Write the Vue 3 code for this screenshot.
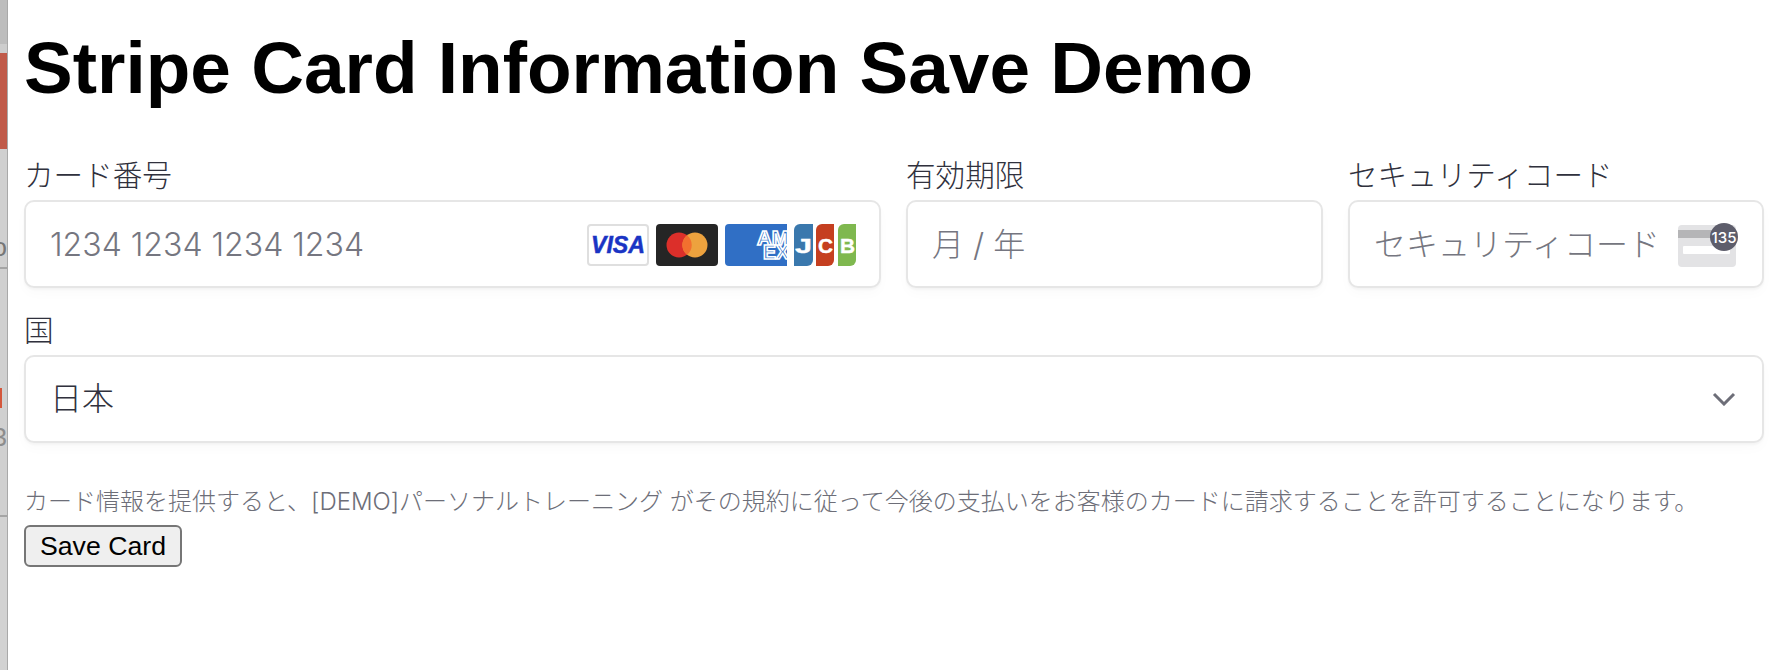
<template>
  <div class="page">
    <div class="strip">
      <div class="seg top"></div>
      <div class="seg light"></div>
      <div class="seg red"></div>
      <div class="seg gray s1"></div>
      <div class="seg gray glyph g1">o</div>
      <div class="seg gray s2"></div>
      <div class="seg line"></div>
      <div class="seg gray s3"></div>
      <div class="seg gray mark"><i></i></div>
      <div class="seg gray s4"></div>
      <div class="seg gray glyph g2">3</div>
      <div class="seg gray s5"></div>
      <div class="seg line"></div>
      <div class="seg gray rest"></div>
    </div>

    <main class="main">
      <h1>Stripe Card Information Save Demo</h1>

      <form class="form" @submit.prevent>
        <div class="row">
          <div class="field">
            <label>カード番号</label>
            <div class="control">
              <input placeholder="1234 1234 1234 1234" readonly />
              <div class="brands">
                <svg class="brand" viewBox="0 0 62 42">
                  <rect x="1" y="1" width="60" height="40" rx="3" fill="#fff" stroke="#dfdfdf" stroke-width="2" />
                  <text x="4" y="29" textLength="54" lengthAdjust="spacingAndGlyphs" class="visa">VISA</text>
                </svg>
                <svg class="brand" viewBox="0 0 62 42">
                  <rect width="62" height="42" rx="4" fill="#252525" />
                  <circle cx="23" cy="21" r="12.5" fill="#dc2f2a" />
                  <circle cx="39" cy="21" r="12.5" fill="#eda23e" />
                  <path d="M31 11.2a12.5 12.5 0 0 1 0 19.6a12.5 12.5 0 0 1 0-19.6z" fill="#f2702f" />
                </svg>
                <svg class="brand" viewBox="0 0 62 42">
                  <path d="M4 0h58v42H4a4 4 0 0 1-4-4V4a4 4 0 0 1 4-4z" fill="#306fc5" />
                  <text x="32" y="20.5" textLength="32" lengthAdjust="spacingAndGlyphs" class="amex">AM</text>
                  <text x="38" y="35" textLength="26" lengthAdjust="spacingAndGlyphs" class="amex">EX</text>
                </svg>
                <svg class="brand" viewBox="0 0 62 42">
                  <path d="M6 0h13v36a6 6 0 0 1-6 6H0V6a6 6 0 0 1 6-6z" fill="#3a78ad" />
                  <path d="M28 0h12v36a6 6 0 0 1-6 6H22V6a6 6 0 0 1 6-6z" fill="#c53f20" />
                  <path d="M50 0h12v36a6 6 0 0 1-6 6H44V6a6 6 0 0 1 6-6z" fill="#7fb84f" />
                  <text x="1" y="28.5" textLength="17" lengthAdjust="spacingAndGlyphs" class="jcb">J</text>
                  <text x="24" y="28.5" textLength="15" lengthAdjust="spacingAndGlyphs" class="jcb">C</text>
                  <text x="46" y="28.5" textLength="15" lengthAdjust="spacingAndGlyphs" class="jcb">B</text>
                </svg>
              </div>
            </div>
          </div>

          <div class="field">
            <label>有効期限</label>
            <div class="control">
              <input placeholder="月 / 年" readonly />
            </div>
          </div>

          <div class="field">
            <label>セキュリティコード</label>
            <div class="control cvc">
              <input placeholder="セキュリティコード" readonly />
              <svg class="cvc-icon" viewBox="0 0 62 46">
                <rect x="0" y="4" width="58" height="42" rx="4" fill="#e3e3e5" />
                <rect x="0" y="9" width="58" height="8" fill="#b5b5b7" />
                <rect x="5" y="25" width="47" height="8" rx="1" fill="#fff" />
                <circle cx="46" cy="16" r="14" fill="#5d5d6b" />
                <text x="46" y="21.5" text-anchor="middle" textLength="25" lengthAdjust="spacingAndGlyphs" class="cvc-num">135</text>
              </svg>
            </div>
          </div>
        </div>

        <div class="field">
          <label>国</label>
          <div class="control select">
            <span>日本</span>
            <svg class="chevron" viewBox="0 0 24 14">
              <path d="M2 2l10 10L22 2" fill="none" stroke="#6d6e78" stroke-width="3" />
            </svg>
          </div>
        </div>

        <p class="note">カード情報を提供すると、[DEMO]パーソナルトレーニング がその規約に従って今後の支払いをお客様のカードに請求することを許可することになります。</p>

        <button type="submit" class="save">Save Card</button>
      </form>
    </main>
  </div>
</template>

<script setup>
</script>

<style>
html, body {
  background: #fff;
}
</style>

<style scoped>
.page {
  display: flex;
  height: 670px;
  overflow: hidden;
  font-family: "Liberation Sans", Arial, sans-serif;
}
.strip {
  flex: 0 0 8px;
  display: flex;
  flex-direction: column;
  overflow: hidden;
  border-right: 1px solid #a9a9a9;
  box-sizing: border-box;
}
.seg {
  flex: none;
}
.top { height: 44px; background: #bdbdbd; }
.light { height: 9px; background: #cdcdcd; }
.red { height: 96px; background: #c05a49; }
.gray { background: #d0d0d0; }
.s1 { height: 85px; }
.glyph {
  height: 26px;
  line-height: 26px;
  font-size: 26px;
  color: #777;
  direction: rtl;
  white-space: nowrap;
}
.s2 { height: 7px; }
.line { height: 2px; background: #a5a5a5; }
.s3 { height: 119px; }
.mark { height: 20px; }
.mark i {
  display: block;
  width: 2px;
  height: 20px;
  background: #d4573c;
}
.s4 { height: 16px; }
.g2 { color: #8d8d8d; }
.s5 { height: 65px; }
.rest { flex: 1; background: #d2d2d2; }

.main {
  flex: 1;
  padding: 0 12px 0 16px;
  min-width: 0;
}
h1 {
  margin: 26px 0 0;
  font-size: 73px;
  line-height: 83px;
  font-weight: 700;
  color: #000;
}
.form {
  margin-top: 49px;
  display: flex;
  flex-direction: column;
  font-family: Inter, "Noto Sans CJK JP", sans-serif;
}
.row {
  display: grid;
  grid-template-columns: 857px 417px 416px;
  gap: 25px;
  margin-bottom: 25px;
}
.field {
  display: flex;
  flex-direction: column;
  min-width: 0;
}
label {
  font-size: 29.6px;
  font-weight: 300;
  line-height: 34px;
  margin-bottom: 8px;
  color: #30313d;
}
.control {
  display: flex;
  align-items: center;
  height: 88px;
  box-sizing: border-box;
  padding: 0 24px;
  background: #fff;
  border: 2px solid #e6e6e6;
  border-radius: 10px;
  box-shadow: 0 2px 2px rgba(0, 0, 0, 0.03), 0 6px 12px rgba(0, 0, 0, 0.02);
  gap: 12px;
}
input {
  flex: 1;
  min-width: 0;
  border: 0;
  outline: 0;
  padding: 0;
  background: transparent;
  font: inherit;
  font-size: 32px;
  font-weight: 300;
  color: #30313d;
}
input::placeholder {
  color: #757680;
  opacity: 1;
}
.brands {
  display: flex;
  gap: 7px;
  margin-top: 2px;
  margin-right: -1px;
}
.brand {
  display: block;
  width: 62px;
  height: 42px;
}
.visa {
  font: italic 700 23px "Liberation Sans", sans-serif;
  fill: #1a34c4;
  stroke: #1a34c4;
  stroke-width: 0.5;
}
.amex {
  font: 700 20px "Liberation Sans", sans-serif;
  fill: #306fc5;
  stroke: #fff;
  stroke-width: 1.6;
}
.jcb {
  font: 700 20px "Liberation Sans", sans-serif;
  fill: #fff;
  stroke: #fff;
  stroke-width: 0.4;
}
.cvc-icon {
  flex: none;
  width: 62px;
  height: 46px;
  margin-left: -2px;
  margin-right: -2px;
}
.cvc-num {
  font: 500 15px Inter, sans-serif;
  fill: #fff;
}
.select {
  justify-content: space-between;
  font-size: 32px;
  font-weight: 300;
  color: #30313d;
  padding-left: 24px;
  padding-right: 26px;
}
.select span {
  padding-bottom: 6px;
}
.chevron {
  width: 24px;
  height: 14px;
}
.note {
  margin: 43px 0 0;
  font-size: 24px;
  font-weight: 300;
  line-height: 32px;
  color: #6d6e78;
  white-space: nowrap;
}
.save {
  align-self: flex-start;
  margin-top: 7px;
  height: 42px;
  width: 158px;
  padding: 0;
  font-family: "Liberation Sans", Arial, sans-serif;
  font-size: 26.67px;
  color: #000;
  background: #efefef;
  border: 2px solid #767676;
  border-radius: 6px;
}
</style>
